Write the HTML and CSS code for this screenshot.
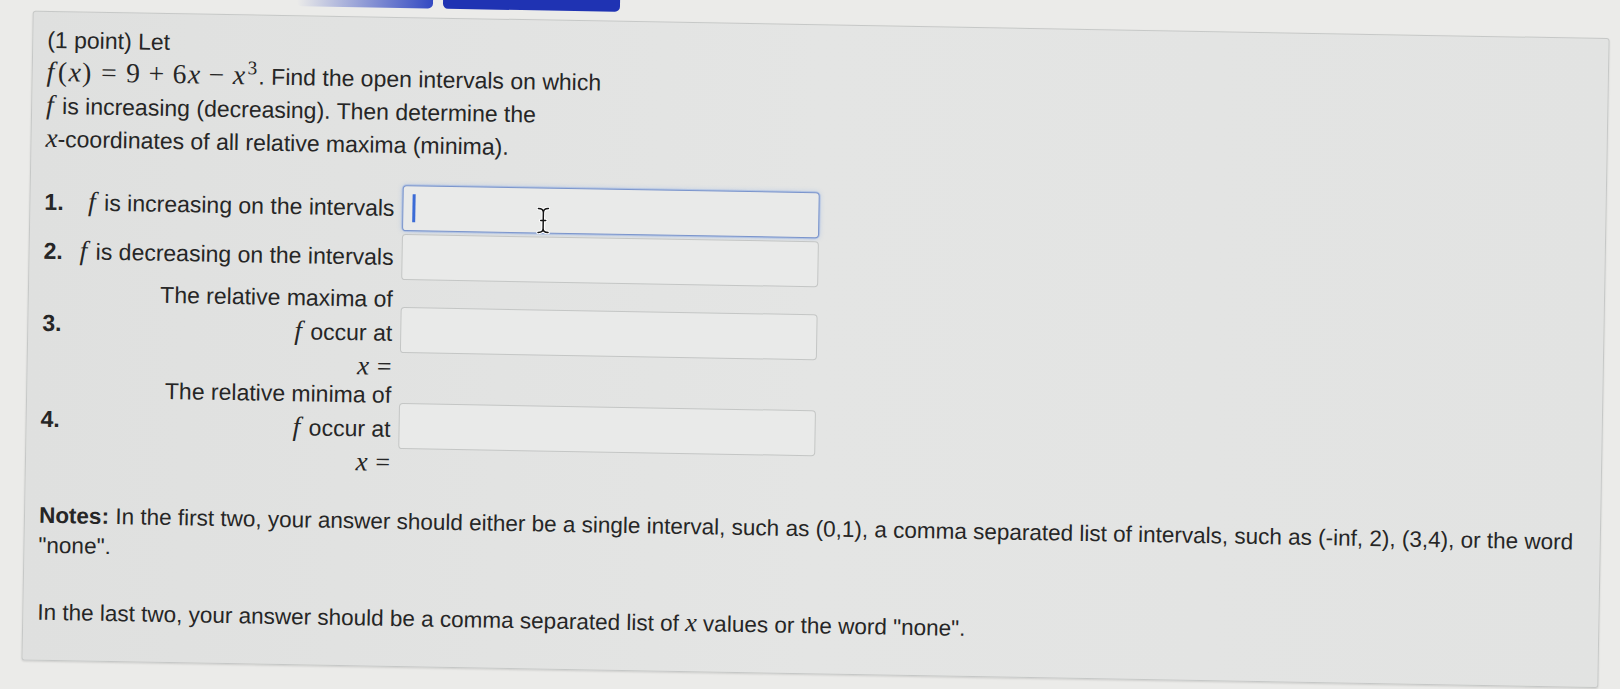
FILE: index.html
```html
<!DOCTYPE html>
<html lang="en">
<head>
    <meta charset="UTF-8">
    <meta name="viewport" content="width=device-width, initial-scale=1.0">
    <title>Problem</title>
    <link rel="stylesheet" href="styles.css">
</head>
<body>
    <div class="page">
        <div class="toolbar">
            <span class="tab tab-fade"></span>
            <span class="tab"></span>
        </div>

        <div class="problem">
            <div class="points">(1 point) Let</div>
            <p class="intro">
                <span class="math"><var class="fn">f</var>(<var>x</var>)<span class="rel">=</span>9<span class="bin">+</span>6<var>x</var><span class="bin">&minus;</span><var>x</var><sup>3</sup></span>. Find the open intervals on which<br>
                <var class="fn">f</var> is increasing (decreasing). Then determine the<br>
                <var>x</var>-coordinates of all relative maxima (minima).
            </p>

            <!-- respuestas -->
            <div class="answers">
                <b class="num">1.</b>
                <label class="ans-label" for="ans1"><var class="fn">f</var> is increasing on the intervals</label>
                <div class="field focused">
                    <input type="text" id="ans1">
                    <span class="caret"></span>
                    <svg class="ibeam" width="14" height="28" viewBox="0 0 14 28">
                        <path d="M2 2c3 0 5 1 5 4v16c0 3-2 4-5 4M12 2c-3 0-5 1-5 4M12 26c-3 0-5-1-5-4M4.5 14h5" fill="none" stroke="#fff" stroke-width="3.5" stroke-linecap="round"/>
                        <path d="M2 2c3 0 5 1 5 4v16c0 3-2 4-5 4M12 2c-3 0-5 1-5 4M12 26c-3 0-5-1-5-4M4.5 14h5" fill="none" stroke="#151515" stroke-width="1.5" stroke-linecap="round"/>
                    </svg>
                </div>

                <b class="num">2.</b>
                <label class="ans-label" for="ans2"><var class="fn">f</var> is decreasing on the intervals</label>
                <div class="field"><input type="text" id="ans2"></div>

                <b class="num">3.</b>
                <label class="ans-label multi" for="ans3">The relative maxima of<br><var class="fn">f</var> occur at<br><var>x</var><span class="eq">=</span></label>
                <div class="field"><input type="text" id="ans3"></div>

                <b class="num">4.</b>
                <label class="ans-label multi" for="ans4">The relative minima of<br><var class="fn">f</var> occur at<br><var>x</var><span class="eq">=</span></label>
                <div class="field"><input type="text" id="ans4"></div>
            </div>

            <p class="note"><b>Notes:</b> In the first two, your answer should either be a single interval, such as (0,1), a comma separated list of intervals, such as (-inf, 2), (3,4), or the word <span class="kw">"none".</span></p>
            <p class="note">In the last two, your answer should be a comma separated list of <var>x</var> values or the word <span class="kw">"none".</span></p>
        </div>
    </div>
</body>
</html>
```

FILE: styles.css
```css
* {
    box-sizing: border-box;
}

body {
    margin: 0;
    height: 100vh;
    overflow: hidden;
    background: #ebebe9;
    font-family: "Liberation Sans", Arial, sans-serif;
    color: #262626;
}

/* la foto está un poco girada */
.page {
    display: flex;
    flex-direction: column;
    width: 1610px;
    padding-left: 33px;
    transform: rotate(1deg);
    transform-origin: 0 0;
}

.toolbar {
    display: flex;
    gap: 10px;
    height: 30px;
    margin-top: -29px;
    padding-left: 264px;
}

.tab {
    width: 177px;
    border-radius: 0 0 5px 5px;
    background: #1f33b3;
}

.tab-fade {
    width: 136px;
    background: linear-gradient(90deg, rgba(90, 115, 220, 0) 0%, #3349c2 100%);
}

.problem {
    margin-top: 9px;
    padding: 12px 12px 32px 14px;
    border: 1px solid #c6c8c7;
    border-radius: 3px;
    background: linear-gradient(90deg, #dfe0df 0%, #e4e5e4 50%, #e2e3e2 100%);
    box-shadow: 0 1px 2px rgba(0, 0, 0, 0.12);
    font-size: 23px;
}

var {
    font-family: "Liberation Serif", "Times New Roman", serif;
    font-style: italic;
    font-size: 1.17em;
}

var.fn {
    margin-right: 0.08em;
}

.math {
    font-family: "Liberation Serif", "Times New Roman", serif;
    font-size: 1.2em;
    letter-spacing: 0.05em;
}

.math var {
    font-size: 1em;
}

.math sup {
    font-size: 0.7em;
    line-height: 0;
    margin-left: 0.05em;
}

.math .rel {
    margin: 0 0.3em;
}

.math .bin {
    margin: 0 0.26em;
}

.points {
    line-height: 32px;
}

.intro {
    margin: 0;
    line-height: 32px;
}

.answers {
    display: grid;
    grid-template-columns: 36px 322px 417px;
    row-gap: 3px;
    align-items: center;
    margin-top: 24px;
}

.num {
    line-height: 33px;
}

.ans-label {
    text-align: right;
    padding-right: 8px;
    line-height: 33px;
}

.ans-label.multi {
    margin-bottom: -8px;
}

.ans-label .eq {
    font-family: "Liberation Serif", "Times New Roman", serif;
    font-size: 1.13em;
    margin-left: 0.3em;
}

.field {
    position: relative;
    height: 46px;
}

.field input {
    width: 100%;
    height: 100%;
    margin: 0;
    padding: 0 10px;
    border: 1px solid #c4c6c5;
    border-radius: 4px;
    background: #e9eae9;
    font: inherit;
    outline: none;
}

.field.focused input {
    border-color: #7b95cc;
    box-shadow: 0 0 0 1px rgba(125, 160, 225, 0.35), 0 0 5px rgba(90, 140, 230, 0.35);
}

.caret {
    position: absolute;
    left: 10px;
    top: 9px;
    width: 3px;
    height: 28px;
    background: #3b6bd6;
}

.ibeam {
    position: absolute;
    left: 134px;
    top: 19px;
}

.note {
    margin: 35px 0 0;
    font-size: 22.5px;
    line-height: 30px;
}

.note + .note {
    margin-top: 36px;
}
```
